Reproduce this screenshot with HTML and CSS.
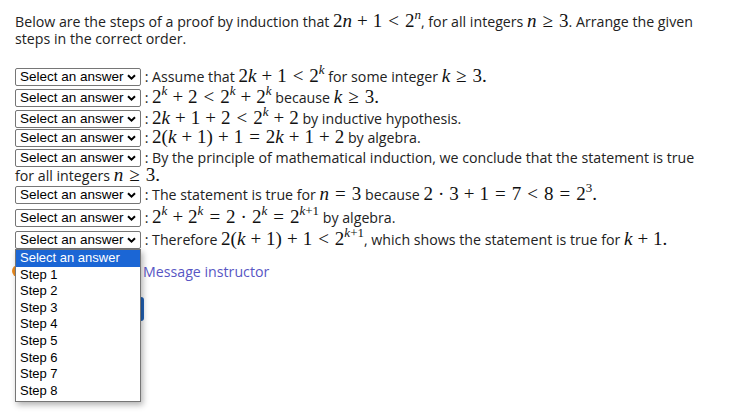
FILE: index.html
```html
<!DOCTYPE html>
<html>
<head>
    <meta charset="UTF-8">
    <link rel="stylesheet" href="styles.css">
</head>
<body>
    <div class="question">
        <p class="intro">Below are the steps of a proof by induction that <span class="m">2<i>n</i><span class="o">+</span>1<span class="r">&lt;</span>2<sup><i>n</i></sup></span>, for all integers <span class="m"><i>n</i><span class="r">&ge;</span>3</span>. Arrange the given steps in the correct order.</p>

        <div class="steps">
            <div class="step s1">
                <span class="sel"><select><option>Select an answer</option></select><svg viewBox="0 0 9 6"><path d="M1 1.2 L4.5 4.6 L8 1.2"/></svg></span> : Assume that <span class="m">2<i>k</i><span class="o">+</span>1<span class="r">&lt;</span>2<sup><i>k</i></sup></span> for some integer <span class="m"><i>k</i><span class="r">&ge;</span>3.</span>
            </div>
            <div class="step s2">
                <span class="sel"><select><option>Select an answer</option></select><svg viewBox="0 0 9 6"><path d="M1 1.2 L4.5 4.6 L8 1.2"/></svg></span> : <span class="m">2<sup><i>k</i></sup><span class="o">+</span>2<span class="r">&lt;</span>2<sup><i>k</i></sup><span class="o">+</span>2<sup><i>k</i></sup></span> because <span class="m"><i>k</i><span class="r">&ge;</span>3.</span>
            </div>
            <div class="step s3">
                <span class="sel"><select><option>Select an answer</option></select><svg viewBox="0 0 9 6"><path d="M1 1.2 L4.5 4.6 L8 1.2"/></svg></span> : <span class="m">2<i>k</i><span class="o">+</span>1<span class="o">+</span>2<span class="r">&lt;</span>2<sup><i>k</i></sup><span class="o">+</span>2</span> by inductive hypothesis.
            </div>
            <div class="step s4">
                <span class="sel"><select><option>Select an answer</option></select><svg viewBox="0 0 9 6"><path d="M1 1.2 L4.5 4.6 L8 1.2"/></svg></span> : <span class="m">2(<i>k</i><span class="o">+</span>1)<span class="o">+</span>1<span class="r">=</span>2<i>k</i><span class="o">+</span>1<span class="o">+</span>2</span> by algebra.
            </div>
            <div class="step s5">
                <span class="sel"><select><option>Select an answer</option></select><svg viewBox="0 0 9 6"><path d="M1 1.2 L4.5 4.6 L8 1.2"/></svg></span> : By the principle of mathematical induction, we conclude that the statement is true for all integers <span class="m"><i>n</i><span class="r">&ge;</span>3.</span>
            </div>
            <div class="step s6">
                <span class="sel"><select><option>Select an answer</option></select><svg viewBox="0 0 9 6"><path d="M1 1.2 L4.5 4.6 L8 1.2"/></svg></span> : The statement is true for <span class="m"><i>n</i><span class="r">=</span>3</span> because <span class="m">2<span class="o">&middot;</span>3<span class="o">+</span>1<span class="r">=</span>7<span class="r">&lt;</span>8<span class="r">=</span>2<sup>3</sup>.</span>
            </div>
            <div class="step s7">
                <span class="sel"><select><option>Select an answer</option></select><svg viewBox="0 0 9 6"><path d="M1 1.2 L4.5 4.6 L8 1.2"/></svg></span> : <span class="m">2<sup><i>k</i></sup><span class="o">+</span>2<sup><i>k</i></sup><span class="r">=</span>2<span class="o">&middot;</span>2<sup><i>k</i></sup><span class="r">=</span>2<sup><i>k</i>+1</sup></span> by algebra.
            </div>
            <div class="step s8">
                <span class="sel"><select><option>Select an answer</option></select><svg viewBox="0 0 9 6"><path d="M1 1.2 L4.5 4.6 L8 1.2"/></svg></span> : Therefore <span class="m">2(<i>k</i><span class="o">+</span>1)<span class="o">+</span>1<span class="r">&lt;</span>2<sup><i>k</i>+1</sup></span>, which shows the statement is true for <span class="m"><i>k</i><span class="o">+</span>1.</span>
            </div>
        </div>

        <div class="help">
            <span class="help-icon"></span>
            <span class="help-space"></span>
            <a href="#" class="help-link">Message instructor</a>
        </div>
        <button class="submit" aria-label="Submit"></button>

        <!-- open list of the last select -->
        <div class="dropdown">
            <div class="item selected">Select an answer</div>
            <div class="item">Step 1</div>
            <div class="item">Step 2</div>
            <div class="item">Step 3</div>
            <div class="item">Step 4</div>
            <div class="item">Step 5</div>
            <div class="item">Step 6</div>
            <div class="item">Step 7</div>
            <div class="item">Step 8</div>
        </div>
    </div>
</body>
</html>
```

FILE: styles.css
```css
html, body {
    min-height: 100vh;
}
body {
    margin: 0;
    padding: 0;
    background: white;
    color: #222;
    font-family: 'Open Sans', 'DejaVu Sans', sans-serif;
    font-size: 14.2px;
}
div.question {
    position: relative;
    padding: 13px 15px;
    min-height: 390px;
}
p.intro {
    margin: 0 0 21px 0;
    line-height: 17px;
    padding-right: 25px;
}
/* math, looks like MathJax output */
span.m {
    font-family: 'Liberation Serif', 'DejaVu Serif', serif;
    font-size: 19px;
    line-height: 14px;
    color: #111;
    white-space: nowrap;
}
span.m i {
    font-style: italic;
}
span.m sup {
    font-size: 13px;
    vertical-align: 0;
    position: relative;
    top: -8px;
    line-height: 0;
}
span.o {
    margin: 0 5px;
}
span.r {
    margin: 0 6px;
}
div.steps {
    width: 700px;
}
div.step {
    line-height: 18px;
}
div.step.s2 { margin-top: 3px; }
div.step.s3 { margin-top: 3px; }
div.step.s4 { margin-top: 1px; }
div.step.s5 { margin-top: 2px; }
div.step.s6 { margin-top: 1px; }
div.step.s7 { margin-top: 5px; }
div.step.s8 { margin-top: 4px; }
span.sel {
    position: relative;
    display: inline-block;
    vertical-align: top;
    height: 18px;
}
span.sel select {
    appearance: none;
    -webkit-appearance: none;
    display: block;
    box-sizing: border-box;
    width: 126px;
    height: 18px;
    margin: 0;
    padding: 0 0 0 4px;
    border: 1px solid #767676;
    border-radius: 2px;
    background: white;
    color: #000;
    font-family: Arial, 'Liberation Sans', sans-serif;
    font-size: 13.5px;
    line-height: 16px;
}
span.sel svg {
    position: absolute;
    right: 5px;
    top: 6px;
    width: 9px;
    height: 6px;
    pointer-events: none;
}
span.sel svg path {
    fill: none;
    stroke: #000;
    stroke-width: 2;
}
div.help {
    margin-top: 12px;
    height: 20px;
    display: flex;
    align-items: center;
    gap: 6px;
}
span.help-icon {
    margin-left: -3px;
    width: 12px;
    height: 12px;
    border-radius: 50%;
    background: #e98a1f;
}
span.help-space {
    width: 107px;
}
a.help-link {
    color: #5856c4;
    text-decoration: none;
}
button.submit {
    display: block;
    margin-top: 16px;
    width: 129px;
    height: 24px;
    border: none;
    border-radius: 3px;
    background: #2163b8;
}
div.dropdown {
    position: absolute;
    left: 15px;
    top: 249px;
    width: 124px;
    border: 1px solid #767676;
    background: white;
    box-shadow: 2px 3px 6px rgba(0, 0, 0, 0.3);
    font-family: Arial, 'Liberation Sans', sans-serif;
    font-size: 13px;
    color: #000;
    padding-bottom: 2px;
}
div.item {
    height: 16.6px;
    line-height: 16px;
    padding-left: 4px;
}
div.item.selected {
    background: #1b66d5;
    color: white;
}
```
